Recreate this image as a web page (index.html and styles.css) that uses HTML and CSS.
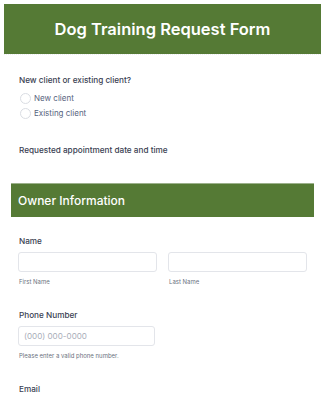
FILE: index.html
```html
<!DOCTYPE html>
<html lang="en">
<head>
    <meta charset="UTF-8">
    <meta name="viewport" content="width=device-width, initial-scale=1.0">
    <title>Dog Training Request Form</title>
    <link rel="stylesheet" href="styles.css">
</head>
<body>
    <div class="form-header">
        <h1>Dog Training Request Form</h1>
    </div>

    <form class="form-body">
        <div class="field field-first">
            <div class="label">New client or existing client?</div>
            <div class="radio-list">
                <label class="radio-row"><span class="radio"></span>New client</label>
                <label class="radio-row"><span class="radio"></span>Existing client</label>
            </div>
        </div>

        <div class="field field-date">
            <div class="label">Requested appointment date and time</div>
        </div>

        <div class="section-title">Owner Information</div>

        <div class="field field-name">
            <div class="label">Name</div>
            <div class="name-row">
                <div class="name-col">
                    <div class="input"></div>
                    <div class="sublabel">First Name</div>
                </div>
                <div class="name-col">
                    <div class="input"></div>
                    <div class="sublabel">Last Name</div>
                </div>
            </div>
        </div>

        <div class="field field-phone">
            <div class="label">Phone Number</div>
            <div class="input input-phone"><span class="placeholder">(000) 000-0000</span></div>
            <div class="sublabel">Please enter a valid phone number.</div>
        </div>

        <div class="field field-email">
            <div class="label">Email</div>
        </div>
    </form>
</body>
</html>
```

FILE: styles.css
```css
body {
    font-family: Inter, "Noto Sans", sans-serif;
    margin: 0;
    padding: 0;
    background-color: #ffffff;
    color: #2c3345;
}

.form-header {
    margin: 4px 4px 0;
    height: 51px;
    box-sizing: border-box;
    background-color: #557a35;
    background-clip: padding-box;
    display: flex;
    align-items: center;
    justify-content: center;
    border-bottom: 1px dotted #eceef1;
}

.form-header h1 {
    margin: 0;
    font-size: 16.5px;
    font-weight: 600;
    color: #ffffff;
}

.form-body {
    padding: 0 11px;
}

.field {
    padding: 0 8px;
}

.field-first {
    margin-top: 19px;
}

.field-date {
    margin-top: 23.5px;
}

.field-name {
    margin-top: 18px;
    padding: 0 7px;
}

.field-phone {
    margin-top: 23px;
    padding: 0 7px;
}

.field-email {
    margin-top: 23px;
}

.label {
    font-size: 8.2px;
    font-weight: 500;
    line-height: 12px;
    color: #3a4152;
}

.field-name .label,
.field-phone .label {
    padding-left: 1px;
}

.radio-list {
    margin-top: 4.5px;
}

.radio-row {
    display: flex;
    align-items: center;
    height: 15px;
    font-size: 8px;
    color: #57647e;
}

.radio {
    width: 9px;
    height: 9px;
    margin: 0 3px 0 1px;
    border: 1px solid #dadde3;
    border-radius: 50%;
    background-color: #ffffff;
}

.section-title {
    margin-top: 27px;
    height: 34px;
    box-sizing: border-box;
    padding-left: 7px;
    display: flex;
    align-items: center;
    background-color: #557a35;
    border-top: 1px solid #9cb18b;
    color: #ffffff;
    font-size: 12px;
    font-weight: 500;
}

.name-row {
    display: grid;
    grid-template-columns: 1fr 1fr;
    gap: 11px;
    margin-top: 5px;
}

.input {
    height: 20px;
    box-sizing: border-box;
    border: 1px solid #e3e5ea;
    border-radius: 3px;
    background-color: #ffffff;
    display: flex;
    align-items: center;
}

.input-phone {
    width: 137px;
    margin-top: 5px;
}

.placeholder {
    padding-left: 5px;
    font-size: 8.1px;
    color: #a9aeb9;
}

.sublabel {
    margin-top: 6px;
    font-size: 6px;
    line-height: 8px;
    color: #6b7280;
    padding-left: 1px;
}
```
